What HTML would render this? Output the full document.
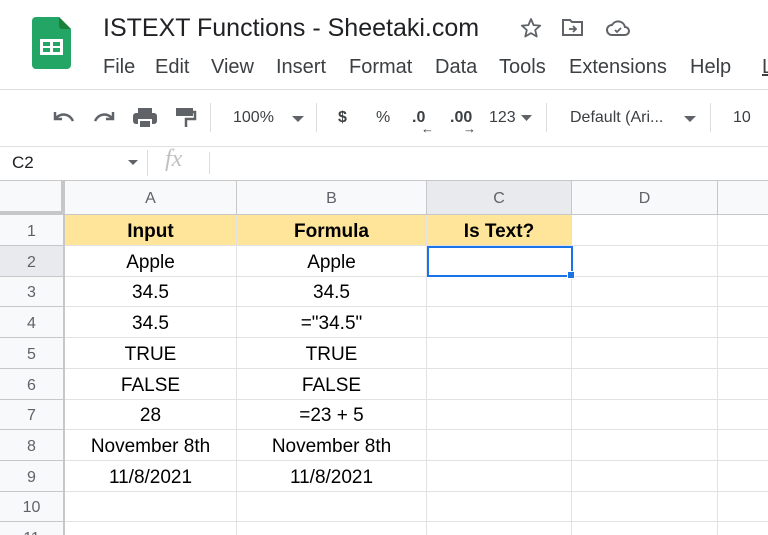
<!DOCTYPE html>
<html><head><meta charset="utf-8"><style>
*{margin:0;padding:0;box-sizing:border-box}
html,body{width:768px;height:535px;overflow:hidden}
body{background:#fff;font-family:"Liberation Sans",Arial,sans-serif;position:relative;color:#000}
.a{position:absolute}
.t{font-size:25px;color:#202124;white-space:nowrap}
.m{font-size:20px;color:#3c4043;white-space:nowrap}
.tb{font-size:16px;color:#3c4043;white-space:nowrap}
.ch{position:absolute;top:181px;height:34px;background:#f8f9fa;border-right:1px solid #c7c7c7;border-bottom:1px solid #c7c7c7;text-align:center;line-height:36px;font-size:16px;color:#5f6368}
.rh{position:absolute;left:0;width:63px;background:#f8f9fa;border-bottom:1px solid #c7c7c7;text-align:center;font-size:16px;color:#5f6368;padding-top:2px}
.c{position:absolute;border-right:1px solid #e2e2e2;border-bottom:1px solid #e2e2e2;text-align:center;font-size:19px;color:#000;white-space:nowrap;padding-top:2px}
</style></head><body>
<svg class="a" style="left:32px;top:17px" width="40" height="52" viewBox="0 0 40 52"><path d="M4 0H27L39 12V48a4 4 0 0 1-4 4H4a4 4 0 0 1-4-4V4a4 4 0 0 1 4-4z" fill="#23a566"/><path d="M27 0L39 12H30a3 3 0 0 1-3-3z" fill="#188038"/><rect x="8" y="22" width="23" height="16" fill="#fff"/><rect x="11" y="25" width="7" height="4" fill="#23a566"/><rect x="21" y="25" width="7" height="4" fill="#23a566"/><rect x="11" y="31" width="7" height="4" fill="#23a566"/><rect x="21" y="31" width="7" height="4" fill="#23a566"/></svg>
<div class="a t" style="left:103px;top:14px">ISTEXT Functions - Sheetaki.com</div>
<svg class="a" style="left:519px;top:16px" width="24" height="24" viewBox="0 0 24 24"><path d="M12 3l2.6 6.1 6.6.5-5 4.4 1.5 6.5L12 17.1 6.3 20.5l1.5-6.5-5-4.4 6.6-.5z" fill="none" stroke="#5f6368" stroke-width="1.8" stroke-linejoin="round"/></svg>
<svg class="a" style="left:561px;top:17px" width="24" height="22" viewBox="0 0 24 22"><path d="M2 3h7l2 2h10v13H2z" fill="none" stroke="#5f6368" stroke-width="2"/><path d="M8 12h7m-3-3l3 3-3 3" fill="none" stroke="#5f6368" stroke-width="1.8"/></svg>
<svg class="a" style="left:605px;top:18px" width="26" height="20" viewBox="0 0 26 20"><path d="M7 17a5 5 0 0 1 0-10 7 7 0 0 1 13 2 4 4 0 0 1 0 8z" fill="none" stroke="#5f6368" stroke-width="2"/><path d="M10 12l2 2 4-4" fill="none" stroke="#5f6368" stroke-width="1.8"/></svg>
<div class="a m" style="left:103px;top:56px">File</div>
<div class="a m" style="left:155px;top:56px">Edit</div>
<div class="a m" style="left:211px;top:56px">View</div>
<div class="a m" style="left:276px;top:56px">Insert</div>
<div class="a m" style="left:349px;top:56px">Format</div>
<div class="a m" style="left:435px;top:56px">Data</div>
<div class="a m" style="left:499px;top:56px">Tools</div>
<div class="a m" style="left:569px;top:56px">Extensions</div>
<div class="a m" style="left:690px;top:56px">Help</div>
<div class="a m" style="left:762px;top:56px;text-decoration:underline">L</div>
<div class="a" style="left:0;top:89px;width:768px;height:1px;background:#dadce0"></div>
<svg class="a" style="left:51px;top:109px" width="26" height="18" viewBox="0 0 26 18"><path d="M4 3v7h7" fill="none" stroke="#5f6368" stroke-width="2.5"/><path d="M5 9c5-5 13-5 17 3" fill="none" stroke="#5f6368" stroke-width="2.5"/></svg>
<svg class="a" style="left:91px;top:109px" width="26" height="18" viewBox="0 0 26 18"><path d="M22 3v7h-7" fill="none" stroke="#5f6368" stroke-width="2.5"/><path d="M21 9c-5-5-13-5-17 3" fill="none" stroke="#5f6368" stroke-width="2.5"/></svg>
<svg class="a" style="left:132px;top:107px" width="26" height="22" viewBox="0 0 26 22"><rect x="6" y="1" width="14" height="5" fill="#5f6368"/><rect x="1" y="6" width="24" height="11" rx="3" fill="#5f6368"/><rect x="7" y="13" width="12" height="8" fill="#5f6368" stroke="#fff" stroke-width="2"/></svg>
<svg class="a" style="left:175px;top:107px" width="22" height="22" viewBox="0 0 22 22"><rect x="1" y="1" width="17" height="8" fill="#5f6368"/><path d="M18 5h2v7h-9v8" fill="none" stroke="#5f6368" stroke-width="2.5"/></svg>
<div class="a" style="left:210px;top:103px;width:1px;height:29px;background:#dadce0"></div>
<div class="a tb" style="left:233px;top:109px">100%</div>
<svg class="a" style="left:292px;top:115px" width="12" height="8"><path d="M0 1h12L6 7z" fill="#5f6368"/></svg>
<div class="a" style="left:316px;top:103px;width:1px;height:29px;background:#dadce0"></div>
<div class="a tb" style="left:338px;top:109px;font-weight:bold">$</div>
<div class="a tb" style="left:376px;top:109px">%</div>
<div class="a tb" style="left:412px;top:109px;font-weight:bold">.0</div>
<div class="a" style="left:421px;top:121px;font-size:13px;color:#3c4043">←</div>
<div class="a tb" style="left:450px;top:109px;font-weight:bold">.00</div>
<div class="a" style="left:463px;top:121px;font-size:13px;color:#3c4043">→</div>
<div class="a tb" style="left:489px;top:109px">123</div>
<svg class="a" style="left:521px;top:115px" width="11" height="7"><path d="M0 0h11L5.5 6z" fill="#5f6368"/></svg>
<div class="a" style="left:546px;top:103px;width:1px;height:29px;background:#dadce0"></div>
<div class="a tb" style="left:570px;top:109px">Default (Ari...</div>
<svg class="a" style="left:684px;top:115px" width="12" height="8"><path d="M0 1h12L6 7z" fill="#5f6368"/></svg>
<div class="a" style="left:710px;top:103px;width:1px;height:29px;background:#dadce0"></div>
<div class="a tb" style="left:733px;top:109px">10</div>
<div class="a" style="left:0;top:146px;width:768px;height:1px;background:#e0e0e0"></div>
<div class="a" style="left:12px;top:153px;font-size:17px;color:#202124">C2</div>
<svg class="a" style="left:128px;top:160px" width="10" height="6"><path d="M0 0h10L5 5z" fill="#5f6368"/></svg>
<div class="a" style="left:147px;top:150px;width:1px;height:26px;background:#dadce0"></div>
<div class="a" style="left:165px;top:146px;font-size:24px;color:#c0c0c0;font-family:'Liberation Serif',serif;font-style:italic">fx</div>
<div class="a" style="left:209px;top:152px;width:1px;height:22px;background:#dadce0"></div>
<div class="a" style="left:0;top:180px;width:768px;height:1px;background:#c7c7c7"></div>
<div class="a" style="left:0;top:181px;width:63px;height:34px;background:#f8f9fa;border-bottom:4px solid #c7c7c7"></div>
<div class="a" style="left:61px;top:181px;width:4px;height:354px;background:#c7c7c7"></div>
<div class="ch" style="left:65px;width:172px">A</div>
<div class="ch" style="left:237px;width:190px">B</div>
<div class="ch" style="left:427px;width:145px;background:#e8eaed">C</div>
<div class="ch" style="left:572px;width:146px">D</div>
<div class="ch" style="left:718px;width:60px"></div>
<div class="rh" style="top:215px;height:31px;line-height:29px">1</div>
<div class="rh" style="top:246px;height:31px;line-height:29px;background:#e8eaed">2</div>
<div class="rh" style="top:277px;height:30px;line-height:28px">3</div>
<div class="rh" style="top:307px;height:31px;line-height:29px">4</div>
<div class="rh" style="top:338px;height:31px;line-height:29px">5</div>
<div class="rh" style="top:369px;height:31px;line-height:29px">6</div>
<div class="rh" style="top:400px;height:30px;line-height:28px">7</div>
<div class="rh" style="top:430px;height:31px;line-height:29px">8</div>
<div class="rh" style="top:461px;height:31px;line-height:29px">9</div>
<div class="rh" style="top:492px;height:30px;line-height:28px">10</div>
<div class="rh" style="top:522px;height:31px;line-height:29px">11</div>
<div class="c" style="left:65px;top:215px;width:172px;height:31px;line-height:29px;background:#ffe599;font-weight:bold">Input</div>
<div class="c" style="left:237px;top:215px;width:190px;height:31px;line-height:29px;background:#ffe599;font-weight:bold">Formula</div>
<div class="c" style="left:427px;top:215px;width:145px;height:31px;line-height:29px;background:#ffe599;font-weight:bold">Is Text?</div>
<div class="c" style="left:572px;top:215px;width:146px;height:31px"></div>
<div class="c" style="left:718px;top:215px;width:60px;height:31px"></div>
<div class="c" style="left:65px;top:246px;width:172px;height:31px;line-height:29px">Apple</div>
<div class="c" style="left:237px;top:246px;width:190px;height:31px;line-height:29px">Apple</div>
<div class="c" style="left:427px;top:246px;width:145px;height:31px"></div>
<div class="c" style="left:572px;top:246px;width:146px;height:31px"></div>
<div class="c" style="left:718px;top:246px;width:60px;height:31px"></div>
<div class="c" style="left:65px;top:277px;width:172px;height:30px;line-height:28px">34.5</div>
<div class="c" style="left:237px;top:277px;width:190px;height:30px;line-height:28px">34.5</div>
<div class="c" style="left:427px;top:277px;width:145px;height:30px"></div>
<div class="c" style="left:572px;top:277px;width:146px;height:30px"></div>
<div class="c" style="left:718px;top:277px;width:60px;height:30px"></div>
<div class="c" style="left:65px;top:307px;width:172px;height:31px;line-height:29px">34.5</div>
<div class="c" style="left:237px;top:307px;width:190px;height:31px;line-height:29px">="34.5"</div>
<div class="c" style="left:427px;top:307px;width:145px;height:31px"></div>
<div class="c" style="left:572px;top:307px;width:146px;height:31px"></div>
<div class="c" style="left:718px;top:307px;width:60px;height:31px"></div>
<div class="c" style="left:65px;top:338px;width:172px;height:31px;line-height:29px">TRUE</div>
<div class="c" style="left:237px;top:338px;width:190px;height:31px;line-height:29px">TRUE</div>
<div class="c" style="left:427px;top:338px;width:145px;height:31px"></div>
<div class="c" style="left:572px;top:338px;width:146px;height:31px"></div>
<div class="c" style="left:718px;top:338px;width:60px;height:31px"></div>
<div class="c" style="left:65px;top:369px;width:172px;height:31px;line-height:29px">FALSE</div>
<div class="c" style="left:237px;top:369px;width:190px;height:31px;line-height:29px">FALSE</div>
<div class="c" style="left:427px;top:369px;width:145px;height:31px"></div>
<div class="c" style="left:572px;top:369px;width:146px;height:31px"></div>
<div class="c" style="left:718px;top:369px;width:60px;height:31px"></div>
<div class="c" style="left:65px;top:400px;width:172px;height:30px;line-height:28px">28</div>
<div class="c" style="left:237px;top:400px;width:190px;height:30px;line-height:28px">=23 + 5</div>
<div class="c" style="left:427px;top:400px;width:145px;height:30px"></div>
<div class="c" style="left:572px;top:400px;width:146px;height:30px"></div>
<div class="c" style="left:718px;top:400px;width:60px;height:30px"></div>
<div class="c" style="left:65px;top:430px;width:172px;height:31px;line-height:29px">November 8th</div>
<div class="c" style="left:237px;top:430px;width:190px;height:31px;line-height:29px">November 8th</div>
<div class="c" style="left:427px;top:430px;width:145px;height:31px"></div>
<div class="c" style="left:572px;top:430px;width:146px;height:31px"></div>
<div class="c" style="left:718px;top:430px;width:60px;height:31px"></div>
<div class="c" style="left:65px;top:461px;width:172px;height:31px;line-height:29px">11/8/2021</div>
<div class="c" style="left:237px;top:461px;width:190px;height:31px;line-height:29px">11/8/2021</div>
<div class="c" style="left:427px;top:461px;width:145px;height:31px"></div>
<div class="c" style="left:572px;top:461px;width:146px;height:31px"></div>
<div class="c" style="left:718px;top:461px;width:60px;height:31px"></div>
<div class="c" style="left:65px;top:492px;width:172px;height:30px"></div>
<div class="c" style="left:237px;top:492px;width:190px;height:30px"></div>
<div class="c" style="left:427px;top:492px;width:145px;height:30px"></div>
<div class="c" style="left:572px;top:492px;width:146px;height:30px"></div>
<div class="c" style="left:718px;top:492px;width:60px;height:30px"></div>
<div class="c" style="left:65px;top:522px;width:172px;height:31px"></div>
<div class="c" style="left:237px;top:522px;width:190px;height:31px"></div>
<div class="c" style="left:427px;top:522px;width:145px;height:31px"></div>
<div class="c" style="left:572px;top:522px;width:146px;height:31px"></div>
<div class="c" style="left:718px;top:522px;width:60px;height:31px"></div>
<div class="a" style="left:427px;top:246px;width:146px;height:31px;border:2px solid #1a73e8"></div>
<div class="a" style="left:567px;top:271px;width:8px;height:8px;background:#1a73e8;border:1px solid #fff"></div>
</body></html>
